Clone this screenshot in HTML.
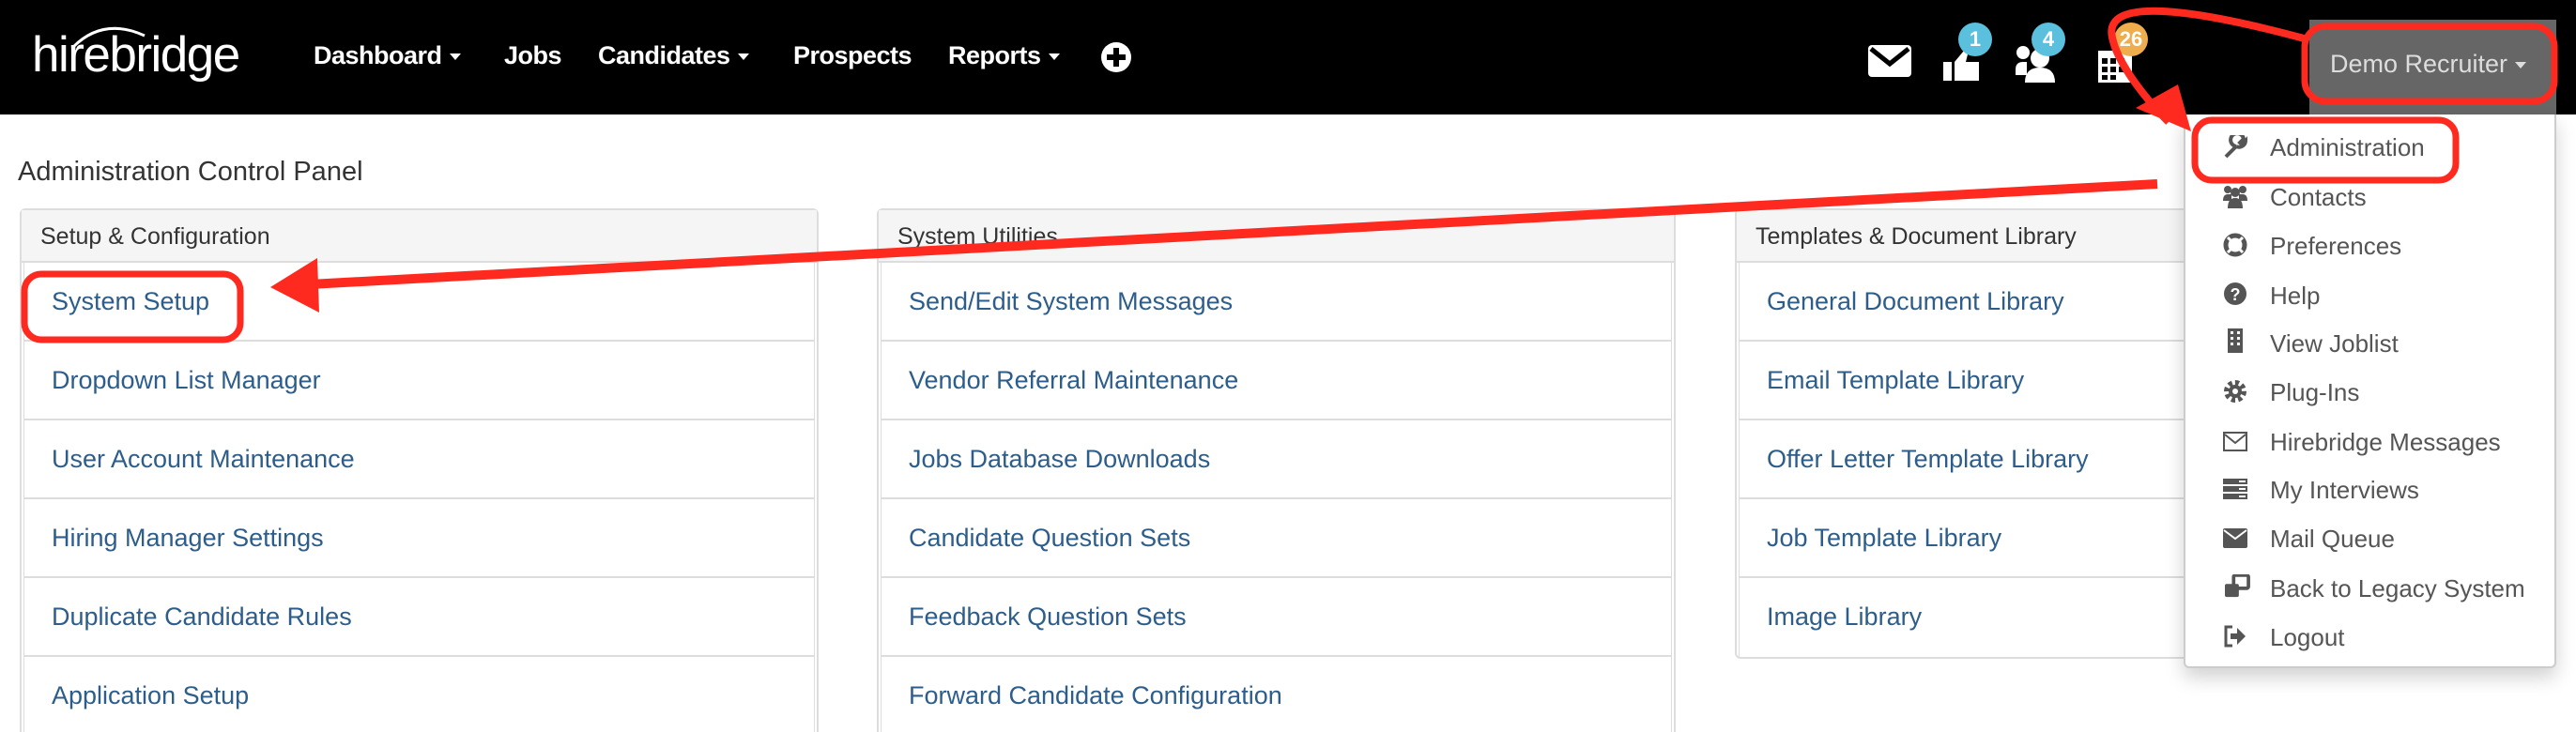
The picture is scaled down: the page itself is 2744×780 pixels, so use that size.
<!DOCTYPE html>
<html><head><meta charset="utf-8"><style>
*{margin:0;padding:0;box-sizing:border-box}
html{width:2744px;height:780px;overflow:hidden}
body{width:2744px;height:780px;overflow:hidden;background:#fff;font-family:"Liberation Sans",sans-serif;position:relative}
.nav{position:absolute;left:0;top:0;width:2744px;height:122px;background:#000}
.logo{position:absolute;left:34px;top:28px;color:#fff;font-size:53px;letter-spacing:-1.5px}
.ni{position:absolute;top:44px;color:#fff;font-size:27px;font-weight:bold;letter-spacing:-0.5px}
.caret{display:inline-block;width:0;height:0;border-left:6px solid transparent;border-right:6px solid transparent;border-top:7px solid currentColor;vertical-align:middle;margin-left:8px}
.badge{position:absolute;width:36px;height:36px;border-radius:50%;color:#fff;font-weight:bold;font-size:22px;text-align:center;line-height:36px}
.user{position:absolute;left:2460px;top:21px;width:263px;height:101px;background:#666;color:#ddd;font-size:27px;padding:32px 0 0 22px}
h1{position:absolute;left:19px;top:167px;font-size:29px;font-weight:normal;color:#333}
.panel{position:absolute;top:222px;width:851px;border:2px solid #ddd;border-radius:6px;background:#fff}
.ph{height:56px;background:#f5f5f5;border-bottom:2px solid #ddd;font-size:25px;color:#333;padding:14px 0 0 20px}
.row{height:84px;border-bottom:2px solid #ddd;font-size:27px;color:#2d5d8a;padding:26px 0 0 29px;margin:0 2px;border-left:1px solid #ddd;border-right:1px solid #ddd}
.menu{position:absolute;left:2326px;top:122px;width:397px;height:590px;background:#fff;border:2px solid #ccc;border-top:none;border-radius:0 0 6px 6px;box-shadow:0 10px 20px rgba(0,0,0,.18)}
.mi{position:absolute;left:90px;font-size:26px;color:#555}
.ic{position:absolute;left:40px;width:26px;height:26px;color:#555}
</style></head><body>
<div class="nav">
<div class="logo">hirebridge</div>
<svg style="position:absolute;left:70px;top:18px" width="100" height="40"><path d="M8 32 Q40 0 84 20" stroke="#fff" stroke-width="3" fill="none"/></svg>
<div class="ni" style="left:334px">Dashboard<span class="caret"></span></div>
<div class="ni" style="left:537px">Jobs</div>
<div class="ni" style="left:637px">Candidates<span class="caret"></span></div>
<div class="ni" style="left:845px">Prospects</div>
<div class="ni" style="left:1010px">Reports<span class="caret"></span></div>
<svg style="position:absolute;left:1172px;top:44px" width="34" height="34"><circle cx="17" cy="17" r="16" fill="#fff"/><rect x="14" y="7" width="6" height="20" fill="#000"/><rect x="7" y="14" width="20" height="6" fill="#000"/></svg>
<svg style="position:absolute;left:1990px;top:48px" width="46" height="34"><rect x="0" y="0" width="46" height="34" rx="4" fill="#fff"/><path d="M3 4 L23 20 L43 4" stroke="#000" stroke-width="5" fill="none"/></svg>
<svg style="position:absolute;left:2070px;top:52px" width="40" height="36"><rect x="0" y="14" width="9" height="20" fill="#fff"/><path d="M12 14 L22 2 L26 6 L24 14 L38 14 L38 34 L12 34Z" fill="#fff"/></svg>
<div class="badge" style="left:2086px;top:24px;background:#5bc0de">1</div>
<svg style="position:absolute;left:2147px;top:44px" width="46" height="44"><circle cx="8" cy="12" r="7" fill="#fff"/><circle cx="26" cy="18" r="10" fill="#fff"/><path d="M0 30 Q0 22 8 22 L12 22 L12 36 L0 36Z M10 44 Q10 28 26 28 Q42 28 42 44Z" fill="#fff"/></svg>
<div class="badge" style="left:2164px;top:24px;background:#5bc0de">4</div>
<svg style="position:absolute;left:2235px;top:46px" width="36" height="42"><rect x="0" y="8" width="36" height="34" fill="#fff"/><g fill="#000"><rect x="4" y="16" width="6" height="6"/><rect x="13" y="16" width="6" height="6"/><rect x="22" y="16" width="6" height="6"/><rect x="4" y="25" width="6" height="6"/><rect x="13" y="25" width="6" height="6"/><rect x="22" y="25" width="6" height="6"/><rect x="4" y="34" width="6" height="5"/><rect x="13" y="34" width="6" height="5"/></g></svg>
<div class="badge" style="left:2252px;top:24px;background:#f0ad4e">26</div>
</div>
<div class="user">Demo Recruiter<span class="caret"></span></div>
<h1>Administration Control Panel</h1>
<div class="panel" style="left:21px"><div class="ph">Setup &amp; Configuration</div>
<div class="row">System Setup</div><div class="row">Dropdown List Manager</div><div class="row">User Account Maintenance</div><div class="row">Hiring Manager Settings</div><div class="row">Duplicate Candidate Rules</div><div class="row" style="border-bottom:none">Application Setup</div></div>
<div class="panel" style="left:934px"><div class="ph">System Utilities</div>
<div class="row">Send/Edit System Messages</div><div class="row">Vendor Referral Maintenance</div><div class="row">Jobs Database Downloads</div><div class="row">Candidate Question Sets</div><div class="row">Feedback Question Sets</div><div class="row" style="border-bottom:none">Forward Candidate Configuration</div></div>
<div class="panel" style="left:1848px"><div class="ph">Templates &amp; Document Library</div>
<div class="row">General Document Library</div><div class="row">Email Template Library</div><div class="row">Offer Letter Template Library</div><div class="row">Job Template Library</div><div class="row" style="border-bottom:none">Image Library</div></div>
<div class="menu">
<svg class="ic" style="top:22px" viewBox="0 0 26 26"><path d="M3 23 L14 12 M14 12 A7 7 0 1 1 22 4 L18 8 L20 10 L24 6 A7 7 0 0 1 14 12" stroke="#555" stroke-width="4" fill="none"/></svg><div class="mi" style="top:20px">Administration</div>
<svg class="ic" style="top:74px" viewBox="0 0 26 26"><circle cx="5" cy="6" r="4" fill="#555"/><circle cx="21" cy="6" r="4" fill="#555"/><circle cx="13" cy="9" r="5" fill="#555"/><path d="M0 18 Q0 11 5 11 L9 11 L9 18Z M17 11 L21 11 Q26 11 26 18 L17 18Z M5 26 Q5 15 13 15 Q21 15 21 26Z" fill="#555"/></svg><div class="mi" style="top:73px">Contacts</div>
<svg class="ic" style="top:126px" viewBox="0 0 26 26"><circle cx="13" cy="13" r="10" stroke="#555" stroke-width="5" fill="none"/><path d="M5 5 L10 10 M21 5 L16 10 M5 21 L10 16 M21 21 L16 16" stroke="#fff" stroke-width="3"/></svg><div class="mi" style="top:125px">Preferences</div>
<svg class="ic" style="top:178px" viewBox="0 0 26 26"><circle cx="13" cy="13" r="12" fill="#555"/><text x="13" y="20" font-size="18" font-weight="bold" fill="#fff" text-anchor="middle" font-family="Liberation Sans">?</text></svg><div class="mi" style="top:178px">Help</div>
<svg class="ic" style="top:228px" viewBox="0 0 26 26"><rect x="5" y="0" width="16" height="26" fill="#555"/><g fill="#fff"><rect x="8" y="3" width="3" height="3"/><rect x="15" y="3" width="3" height="3"/><rect x="8" y="9" width="3" height="3"/><rect x="15" y="9" width="3" height="3"/><rect x="8" y="15" width="3" height="3"/><rect x="15" y="15" width="3" height="3"/></g></svg><div class="mi" style="top:229px">View Joblist</div>
<svg class="ic" style="top:282px" viewBox="0 0 26 26"><circle cx="13" cy="13" r="9" fill="none" stroke="#555" stroke-width="6" stroke-dasharray="4 3"/><circle cx="13" cy="13" r="7" fill="#555"/><circle cx="13" cy="13" r="3" fill="#fff"/></svg><div class="mi" style="top:281px">Plug-Ins</div>
<svg class="ic" style="top:336px" viewBox="0 0 26 26"><rect x="1" y="3" width="24" height="19" fill="none" stroke="#555" stroke-width="2"/><path d="M2 5 L13 14 L24 5" stroke="#555" stroke-width="2" fill="none"/></svg><div class="mi" style="top:334px">Hirebridge Messages</div>
<svg class="ic" style="top:386px" viewBox="0 0 26 26"><rect x="0" y="2" width="26" height="6" fill="#555"/><rect x="0" y="10" width="26" height="6" fill="#555"/><rect x="0" y="18" width="26" height="6" fill="#555"/><rect x="17" y="4" width="7" height="2" fill="#fff"/><rect x="17" y="12" width="7" height="2" fill="#fff"/><rect x="17" y="20" width="7" height="2" fill="#fff"/></svg><div class="mi" style="top:385px">My Interviews</div>
<svg class="ic" style="top:438px" viewBox="0 0 26 26"><rect x="0" y="3" width="26" height="21" rx="2" fill="#555"/><path d="M1 5 L13 14 L25 5" stroke="#fff" stroke-width="2" fill="none"/></svg><div class="mi" style="top:437px">Mail Queue</div>
<svg class="ic" style="top:490px;width:30px" viewBox="0 0 30 28"><rect x="11" y="1" width="17" height="15" rx="2" fill="none" stroke="#555" stroke-width="4"/><rect x="1" y="11" width="16" height="15" rx="2" fill="#555"/></svg><div class="mi" style="top:490px">Back to Legacy System</div>
<svg class="ic" style="top:543px" viewBox="0 0 26 26"><path d="M10 3 L3 3 L3 23 L10 23" stroke="#555" stroke-width="3" fill="none"/><path d="M8 10 L15 10 L15 4 L24 13 L15 22 L15 16 L8 16Z" fill="#555"/></svg><div class="mi" style="top:542px">Logout</div>
</div>
<svg style="position:absolute;left:0;top:0" width="2744" height="780">
<g stroke="#ff2a1f" stroke-width="7" fill="none">
<rect x="26" y="292" width="230" height="70" rx="18"/>
<rect x="2455" y="28" width="266" height="80" rx="22"/>
<rect x="2338" y="128" width="278" height="64" rx="18"/>
<path d="M2298 196 L330 303" stroke-width="10"/>
<path d="M2458 42 C2340 10 2240 -5 2250 40 C2256 70 2290 110 2310 130" stroke-width="8"/>
</g>
<polygon points="288,306 338,275 340,333" fill="#ff2a1f"/>
<polygon points="2334,140 2275,115 2320,90" fill="#ff2a1f"/>
</svg>
</body></html>
